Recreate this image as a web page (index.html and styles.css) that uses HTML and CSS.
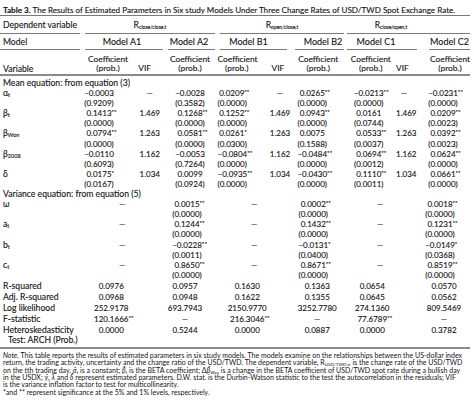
FILE: index.html
```html
<!DOCTYPE html>
<html>
<head>
<meta charset="utf-8">
<link rel="stylesheet" href="styles.css">
</head>
<body>
<div class="page">
  <p class="title"><b>Table 3.</b> The Results of Estimated Parameters in Six study Models Under Three Change Rates of USD/TWD Spot Exchange Rate.</p>

  <div class="row h1">
    <div class="lab u">Dependent variable</div>
    <div class="ga u">R<sub>close/close,t</sub></div>
    <div class="gb u">R<sub>open/close,t</sub></div>
    <div class="gc u">R<sub>close/open,t</sub></div>
  </div>

  <div class="row h2">
    <div class="lab u">Model</div>
    <div class="ma1 u">Model A1</div>
    <div class="ma2 u">Model A2</div>
    <div class="mb1 u">Model B1</div>
    <div class="mb2 u">Model B2</div>
    <div class="mc1 u">Model C1</div>
    <div class="mc2 u">Model C2</div>
  </div>

  <div class="row h3">
    <div class="lab">Variable</div>
    <div>Coefficient<br>(prob.)</div>
    <div>VIF</div>
    <div>Coefficient<br>(prob.)</div>
    <div>Coefficient<br>(prob.)</div>
    <div>VIF</div>
    <div>Coefficient<br>(prob.)</div>
    <div>Coefficient<br>(prob.)</div>
    <div>VIF</div>
    <div>Coefficient<br>(prob.)</div>
  </div>

  <div class="body">
    <div class="row sec first"><div class="lab">Mean equation: from equation (3)</div></div>

    <div class="row m"><div class="lab">α<sub>t</sub></div><div>−0.0003</div><div>—</div><div>−0.0028</div><div>0.0209<span class="s">**</span></div><div>—</div><div>0.0265<span class="s">**</span></div><div>−0.0213<span class="s">**</span></div><div>—</div><div>−0.0231<span class="s">**</span></div></div>
    <div class="row m"><div class="lab"></div><div>(0.9209)</div><div></div><div>(0.3582)</div><div>(0.0000)</div><div></div><div>(0.0000)</div><div>(0.0000)</div><div></div><div>(0.0000)</div></div>

    <div class="row m"><div class="lab">β<sub>t</sub></div><div>0.1413<span class="s">**</span></div><div>1.469</div><div>0.1268<span class="s">**</span></div><div>0.1252<span class="s">**</span></div><div>1.469</div><div>0.0943<span class="s">**</span></div><div>0.0161</div><div>1.469</div><div>0.0209<span class="s">**</span></div></div>
    <div class="row m"><div class="lab"></div><div>(0.0000)</div><div></div><div>(0.0000)</div><div>(0.0000)</div><div></div><div>(0.0000)</div><div>(0.0744)</div><div></div><div>(0.0023)</div></div>

    <div class="row m"><div class="lab">β<sub>Won</sub></div><div>0.0794<span class="s">**</span></div><div>1.263</div><div>0.0581<span class="s">**</span></div><div>0.0261<span class="s">*</span></div><div>1.263</div><div>0.0075</div><div>0.0533<span class="s">**</span></div><div>1.263</div><div>0.0392<span class="s">**</span></div></div>
    <div class="row m"><div class="lab"></div><div>(0.0000)</div><div></div><div>(0.0000)</div><div>(0.0300)</div><div></div><div>(0.1588)</div><div>(0.0037)</div><div></div><div>(0.0023)</div></div>

    <div class="row m"><div class="lab">β<sub>2008</sub></div><div>−0.0110</div><div>1.162</div><div>−0.0053</div><div>−0.0804<span class="s">**</span></div><div>1.162</div><div>−0.0484<span class="s">**</span></div><div>0.0694<span class="s">**</span></div><div>1.162</div><div>0.0624<span class="s">**</span></div></div>
    <div class="row m"><div class="lab"></div><div>(0.6093)</div><div></div><div>(0.7264)</div><div>(0.0000)</div><div></div><div>(0.0000)</div><div>(0.0012)</div><div></div><div>(0.0000)</div></div>

    <div class="row m"><div class="lab">δ</div><div>0.0175<span class="s">*</span></div><div>1.034</div><div>0.0099</div><div>−0.0935<span class="s">**</span></div><div>1.034</div><div>−0.0430<span class="s">**</span></div><div>0.1110<span class="s">**</span></div><div>1.034</div><div>0.0661<span class="s">**</span></div></div>
    <div class="row m"><div class="lab"></div><div>(0.0167)</div><div></div><div>(0.0924)</div><div>(0.0000)</div><div></div><div>(0.0000)</div><div>(0.0011)</div><div></div><div>(0.0000)</div></div>

    <div class="row sec"><div class="lab">Variance equation: from equation (5)</div></div>

    <div class="row v"><div class="lab">ω</div><div class="sp">—</div><div>0.0015<span class="s">**</span></div><div class="sp">—</div><div>0.0002<span class="s">**</span></div><div class="sp">—</div><div>0.0018<span class="s">**</span></div></div>
    <div class="row v"><div class="lab"></div><div class="sp"></div><div>(0.0000)</div><div class="sp"></div><div>(0.0000)</div><div class="sp"></div><div>(0.0000)</div></div>

    <div class="row v"><div class="lab">a<sub>t</sub></div><div class="sp">—</div><div>0.1244<span class="s">**</span></div><div class="sp">—</div><div>0.1432<span class="s">**</span></div><div class="sp">—</div><div>0.1231<span class="s">**</span></div></div>
    <div class="row v"><div class="lab"></div><div class="sp"></div><div>(0.0000)</div><div class="sp"></div><div>(0.0000)</div><div class="sp"></div><div>(0.0000)</div></div>

    <div class="row v"><div class="lab">b<sub>t</sub></div><div class="sp">—</div><div>−0.0228<span class="s">**</span></div><div class="sp">—</div><div>−0.0131<span class="s">*</span></div><div class="sp">—</div><div>−0.0149<span class="s">*</span></div></div>
    <div class="row v"><div class="lab"></div><div class="sp"></div><div>(0.0011)</div><div class="sp"></div><div>(0.0400)</div><div class="sp"></div><div>(0.0368)</div></div>

    <div class="row v"><div class="lab">c<sub>t</sub></div><div class="sp">—</div><div>0.8650<span class="s">**</span></div><div class="sp">—</div><div>0.8671<span class="s">**</span></div><div class="sp">—</div><div>0.8519<span class="s">**</span></div></div>
    <div class="row v"><div class="lab"></div><div class="sp"></div><div>(0.0000)</div><div class="sp"></div><div>(0.0000)</div><div class="sp"></div><div>(0.0000)</div></div>
  </div>

  <div class="stats">
    <div class="row st"><div class="lab">R-squared</div><div class="sp">0.0976</div><div>0.0957</div><div class="sp">0.1630</div><div>0.1363</div><div class="sp">0.0654</div><div>0.0570</div></div>
    <div class="row st"><div class="lab">Adj. R-squared</div><div class="sp">0.0968</div><div>0.0948</div><div class="sp">0.1622</div><div>0.1355</div><div class="sp">0.0645</div><div>0.0562</div></div>
    <div class="row st"><div class="lab">Log likelihood</div><div class="sp">252.9178</div><div>693.7943</div><div class="sp">2150.9770</div><div>3252.7780</div><div class="sp">274.1360</div><div>809.5469</div></div>
    <div class="row st"><div class="lab">F-statistic</div><div class="sp">120.1666<span class="s">**</span></div><div>—</div><div class="sp">216.3046<span class="s">**</span></div><div>—</div><div class="sp">77.6789<span class="s">**</span></div><div>—</div></div>
    <div class="row st"><div class="lab hang">Heteroskedasticity<br>Test: ARCH (Prob.)</div><div class="sp">0.0000</div><div>0.5244</div><div class="sp">0.0000</div><div>0.0887</div><div class="sp">0.0000</div><div>0.3782</div></div>
  </div>

  <p class="note"><i>Note.</i> This table reports the results of estimated parameters in six study models. The models examine on the relationships between the US-dollar index<br>return, the trading activity, uncertainty and the change ratio of the USD/TWD. The dependent variable, R<sub>USD/TWD,t</sub>, is the change rate of the USD/TWD<br>on the <i>t</i>th trading day. <i>α̂<sub>t</sub></i> is a constant; <i>β̂<sub>t</sub></i> is the BETA coefficient; Δ<i>β̂<sub>Won</sub></i> is a change in the BETA coefficient of USD/TWD spot rate during a bullish day<br>in the USDX; <i>γ̂</i>, <i>λ̂</i> and <i>δ̂</i> represent estimated parameters. D.W. stat. is the Durbin-Watson statistic to the test the autocorrelation in the residuals; VIF<br>is the variance inflation factor to test for multicollinearity.<br>*and ** represent significance at the 5% and 1% levels, respectively.</p>
</div>
</body>
</html>
```

FILE: styles.css
```css
* { box-sizing: border-box; margin: 0; padding: 0; }
body { margin: 0; background: #fff; color: #141213; font-family: Lato, "Liberation Sans", sans-serif; -webkit-text-stroke: 0.12px #141213; }
.page { width: 470px; }

.title { font-size: 8.1px; line-height: 10px; padding: 5px 0 0 3px; height: 16px; border-bottom: 1px solid #7a7a7a; white-space: nowrap; }
.title b { font-weight: 700; }

.row {
  display: grid;
  grid-template-columns: 83px 45px 37.5px 52px 44.5px 29px 54.5px 50.5px 27px 47px;
  font-size: 8px;
  line-height: 10px;
  text-align: center;
}
.row > div { white-space: nowrap; }
.lab { text-align: left; padding-left: 3px; font-size: 8.65px; }

sub { font-size: 5px; line-height: 0; vertical-align: -1px; }
.lab sub { font-size: 5.5px; }
.s { display: inline-block; width: 0; font-size: 6px; line-height: 0; vertical-align: 2px; text-align: left; }

.u { border-bottom: 1px solid #7a7a7a; }

/* header row 1 */
.h1 > div { padding: 4px 0 3px; }
.h1 .lab { padding-left: 3px; margin-right: 3px; }
.h1 .ga { grid-column: 2 / 5; margin: 0 2.5px 0 2px; font-size: 8.6px; }
.h1 .gb { grid-column: 5 / 8; margin: 0 1.5px 0 2.5px; font-size: 8.6px; }
.h1 .gc { grid-column: 8 / 11; margin-left: 1.5px; padding-right: 35px; font-size: 8.6px; }

/* header row 2 */
.h2 > div { padding: 3px 0 2px; font-size: 9px; }
.h2 .lab { padding-left: 3px; margin-right: 3px; font-size: 8.65px; }
.h2 .ma1 { grid-column: 2 / 4; margin: 0 2.5px 0 2px; padding-right: 4px; }
.h2 .ma2 { grid-column: 4; margin: 0 2.5px; padding-right: 5px; }
.h2 .mb1 { grid-column: 5 / 7; margin: 0 4px 0 2.5px; padding-right: 10px; }
.h2 .mb2 { grid-column: 7; margin: 0 1.5px 0 4px; padding-left: 7px; }
.h2 .mc1 { grid-column: 8 / 10; margin: 0 6px 0 1.5px; padding-right: 12px; }
.h2 .mc2 { grid-column: 10; margin-left: 6px; }

/* header row 3 */
.h3 { line-height: 9px; padding: 4.5px 0 1.5px; border-bottom: 2px solid #8a8a8a; font-size: 8.4px; }
.h3 > div { align-self: end; }
.h3 > :nth-child(2) { padding-left: 5px; }
.h3 > :nth-child(3) { padding-right: 4px; }
.h3 > :nth-child(4) { padding-right: 3px; }
.h3 > :nth-child(5) { padding-right: 6px; }
.h3 > :nth-child(6) { padding-left: 3px; }
.h3 > :nth-child(9) { text-align: left; }
.h3 > :nth-child(10) { padding-left: 7px; }

/* body */
.body { padding-top: 2px; }
.body .row { line-height: 10.1px; }
.sec > .lab { grid-column: 1 / -1; }

.m > :nth-child(2) { padding-right: 13px; }
.m > :nth-child(3) { padding-left: 6px; }
.m > :nth-child(4) { padding-right: 3px; }
.m > :nth-child(5) { padding-right: 16px; }
.m > :nth-child(6) { padding-left: 7px; }
.m > :nth-child(7) { padding-right: 12px; }
.m > :nth-child(8) { padding-right: 4px; }
.m > :nth-child(9) { padding-right: 11px; }
.m > :nth-child(10) { padding-right: 7px; }

.sp { grid-column: span 2; }
.v > :nth-child(2) { padding-right: 4px; }
.v > :nth-child(3) { padding-right: 9px; }
.v > :nth-child(5) { padding-right: 10px; }
.v > :nth-child(6) { padding-right: 8px; }
.v > :nth-child(7) { padding-right: 13px; }

/* stats */
.stats { padding: 1.5px 0 1px; border-bottom: 2px solid #8a8a8a; }
.stats .row { line-height: 10.8px; }
.st > :nth-child(2) { padding-right: 26px; }
.st > :nth-child(3) { padding-right: 13px; }
.st > :nth-child(4) { padding-right: 14px; }
.st > :nth-child(5) { padding-right: 2px; }
.st > :nth-child(6) { padding-right: 24px; }
.st > :nth-child(7) { padding-right: 5px; }
.hang { padding-left: 8px; text-indent: -5px; }

/* note */
.note { margin-top: 3px; padding-left: 3px; font-size: 7px; line-height: 7.3px; white-space: nowrap; -webkit-text-stroke: 0; }
.note sub { font-size: 4.5px; }
```
